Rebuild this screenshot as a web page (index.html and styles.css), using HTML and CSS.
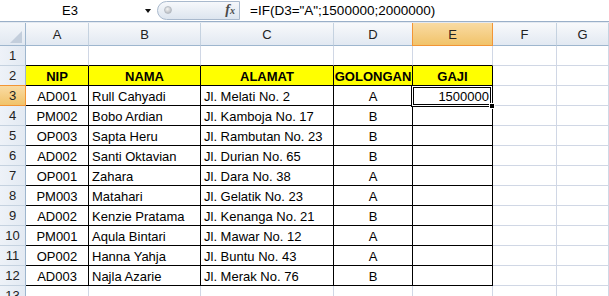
FILE: index.html
```html
<!DOCTYPE html>
<html>
<head>
<meta charset="utf-8">
<link rel="stylesheet" href="styles.css">
</head>
<body>
<div class="app">
  <div class="fbar">
    <div class="namebox"><span class="name">E3</span><span class="arrow"></span></div>
    <div class="pill"><span class="knob"></span><span class="fx"><i>f</i><span class="fxsub">x</span></span></div>
    <div class="formula">=IF(D3="A";1500000;2000000)</div>
  </div>
  <div class="sheet">
    <div class="corner"><svg width="26" height="23" viewBox="0 0 26 23"><polygon points="22,8 22,20 10,20" fill="#c3cedc"/></svg></div>
    <div class="ch">A</div><div class="ch">B</div><div class="ch">C</div><div class="ch">D</div><div class="ch sel">E</div><div class="ch">F</div><div class="ch">G</div>

    <div class="rh">1</div>
    <div class="c tb"></div><div class="c tb"></div><div class="c tb"></div><div class="c tb"></div><div class="c tb"></div><div class="c"></div><div class="c"></div>

    <div class="rh">2</div>
    <div class="c t y">NIP</div><div class="c t y">NAMA</div><div class="c t y">ALAMAT</div><div class="c t y">GOLONGAN</div><div class="c t y">GAJI</div><div class="c"></div><div class="c"></div>

    <div class="rh sel">3</div>
    <div class="c t ctr">AD001</div><div class="c t">Rull Cahyadi</div><div class="c t">Jl. Melati No. 2</div><div class="c t ctr">A</div><div class="c t rgt active">1500000<span class="cursor"><span class="handle"></span></span></div><div class="c"></div><div class="c"></div>

    <div class="rh">4</div>
    <div class="c t ctr">PM002</div><div class="c t">Bobo Ardian</div><div class="c t">Jl. Kamboja No. 17</div><div class="c t ctr">B</div><div class="c t"></div><div class="c"></div><div class="c"></div>

    <div class="rh">5</div>
    <div class="c t ctr">OP003</div><div class="c t">Sapta Heru</div><div class="c t">Jl. Rambutan No. 23</div><div class="c t ctr">B</div><div class="c t"></div><div class="c"></div><div class="c"></div>

    <div class="rh">6</div>
    <div class="c t ctr">AD002</div><div class="c t">Santi Oktavian</div><div class="c t">Jl. Durian No. 65</div><div class="c t ctr">B</div><div class="c t"></div><div class="c"></div><div class="c"></div>

    <div class="rh">7</div>
    <div class="c t ctr">OP001</div><div class="c t">Zahara</div><div class="c t">Jl. Dara No. 38</div><div class="c t ctr">A</div><div class="c t"></div><div class="c"></div><div class="c"></div>

    <div class="rh">8</div>
    <div class="c t ctr">PM003</div><div class="c t">Matahari</div><div class="c t">Jl. Gelatik No. 23</div><div class="c t ctr">A</div><div class="c t"></div><div class="c"></div><div class="c"></div>

    <div class="rh">9</div>
    <div class="c t ctr">AD002</div><div class="c t">Kenzie Pratama</div><div class="c t">Jl. Kenanga No. 21</div><div class="c t ctr">B</div><div class="c t"></div><div class="c"></div><div class="c"></div>

    <div class="rh">10</div>
    <div class="c t ctr">PM001</div><div class="c t">Aqula Bintari</div><div class="c t">Jl. Mawar No. 12</div><div class="c t ctr">A</div><div class="c t"></div><div class="c"></div><div class="c"></div>

    <div class="rh">11</div>
    <div class="c t ctr">OP002</div><div class="c t">Hanna Yahja</div><div class="c t">Jl. Buntu No. 43</div><div class="c t ctr">A</div><div class="c t"></div><div class="c"></div><div class="c"></div>

    <div class="rh">12</div>
    <div class="c t ctr">AD003</div><div class="c t">Najla Azarie</div><div class="c t">Jl. Merak No. 76</div><div class="c t ctr">B</div><div class="c t"></div><div class="c"></div><div class="c"></div>

    <div class="rh">13</div>
    <div class="c"></div><div class="c"></div><div class="c"></div><div class="c"></div><div class="c"></div><div class="c"></div><div class="c"></div>
  </div>
</div>
</body>
</html>
```

FILE: styles.css
```css
* { box-sizing: border-box; }
html, body { margin: 0; padding: 0; background: #fff; }
body { width: 609px; height: 296px; overflow: hidden; font-family: "Liberation Sans", Arial, sans-serif; font-size: 13px; color: #000; }
.app { width: 609px; height: 296px; overflow: hidden; display: flex; flex-direction: column; }

.fbar {
  height: 22px;
  flex: none;
  display: flex;
  align-items: center;
  background: #fff;
  border-bottom: 1px solid #9aafc8;
}
.namebox { width: 157px; display: flex; align-items: center; }
.name { width: 140px; text-align: center; font-size: 13px; color: #000; }
.arrow {
  margin-left: 5px;
  width: 0; height: 0;
  border-top: 4px solid #111;
  border-left: 3.5px solid transparent;
  border-right: 3.5px solid transparent;
}
.pill {
  width: 83px;
  height: 19px;
  margin-top: -1px;
  border: 1px solid #a9b9cd;
  border-radius: 10px 0 0 10px;
  background: linear-gradient(#f6f8fb, #dde5ef);
  display: flex;
  align-items: center;
  justify-content: space-between;
  padding: 0 4px 0 6px;
}
.knob {
  width: 8px; height: 8px; border-radius: 50%;
  background: radial-gradient(circle at 40% 35%, #f4f4f4, #a9adb3);
  border: 1px solid #b6bcc4;
}
.fx { font-family: "Liberation Serif", serif; font-size: 14px; color: #4a4a4a; font-weight: bold; display: flex; align-items: baseline; }
.fx i { font-style: italic; }
.fxsub { font-style: italic; font-size: 10px; margin-left: 0; }
.formula { padding-left: 10px; font-size: 13.5px; margin-top: -1px; white-space: nowrap; }

.sheet {
  display: grid;
  grid-template-columns: 26px 63px 112px 133px 79px 80px 64px 1fr;
  grid-template-rows: 23px repeat(13, 20px);
  border-top: 1px solid #e3e9f1;
}
.corner {
  background: linear-gradient(#f3f6fa, #e1e8f1);
  border-right: 1px solid #9eb6ce;
  border-bottom: 1px solid #9eb6ce;
  overflow: hidden;
}
.corner svg { display: block; }
.ch {
  background: linear-gradient(#f8f9fb, #e2e9f2);
  border-right: 1px solid #c5d2e0;
  border-bottom: 1px solid #9eb6ce;
  display: flex; align-items: center; justify-content: center;
  color: #222; font-size: 13px; padding-top: 1px;
}
.ch.sel {
  background: linear-gradient(#f9dba3, #f1c36a);
  border-right: 1px solid #f29536;
  border-left: 1px solid #f29536;
  border-bottom: 1px solid #f29536;
  margin-left: -1px;
}
.rh {
  background: linear-gradient(90deg, #eef2f8, #e3eaf3);
  border-right: 1px solid #9eb6ce;
  border-bottom: 1px solid #c5d2e0;
  display: flex; align-items: center; justify-content: center;
  color: #222; font-size: 13px;
}
.rh.sel {
  background: linear-gradient(#f9dba3, #f1c36a);
  border-right: 1px solid #f29536;
  border-bottom: 1px solid #f29536;
  border-top: 1px solid #f29536;
  margin-top: -1px;
}
.c {
  border-right: 1px solid #d0d7e5;
  border-bottom: 1px solid #d0d7e5;
  display: flex; align-items: center;
  padding: 1px 3px 0 3px;
  white-space: nowrap;
  overflow: visible;
}
.c.tb { border-bottom-color: #000; }
.c.t { border-right-color: #000; border-bottom-color: #000; }
.c.y { background: #ffff00; font-weight: bold; justify-content: center; padding: 1px 0 0 0; }
.c.ctr { justify-content: center; }
.c.rgt { justify-content: flex-end; padding-right: 3px; }
.active { position: relative; }
.cursor {
  position: absolute;
  left: -2px; top: -1px;
  width: 82px; height: 22px;
  border: 1px solid #000;
  box-shadow: inset 0 0 0 1px #fff, inset 0 0 0 2px #000;
}
.handle {
  position: absolute;
  right: -3px; bottom: -3px;
  width: 6px; height: 6px;
  background: #000;
  border: 1px solid #fff;
}
```
